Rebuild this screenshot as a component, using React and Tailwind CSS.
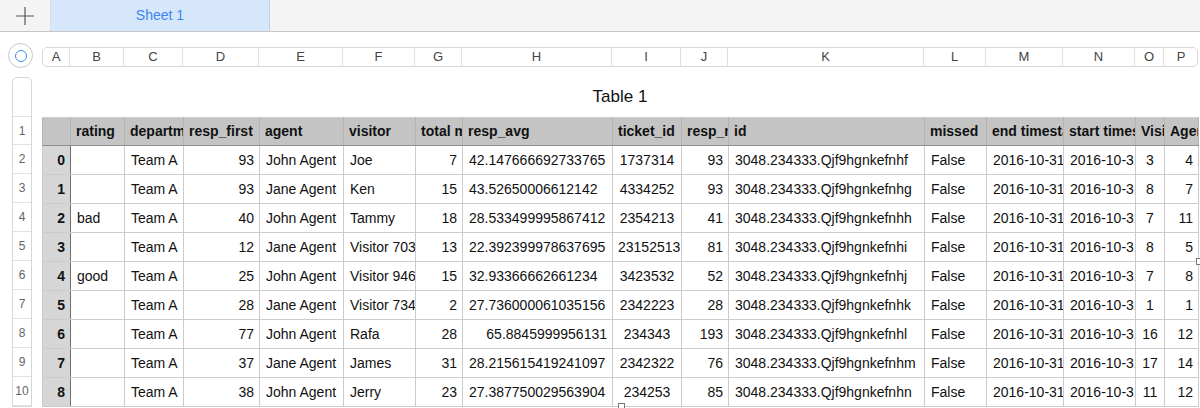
import React from 'react';

const font = { fontFamily: '"Liberation Sans", Arial, sans-serif' };

// column letters + widths (px), taken from the header bar
const cols = [
  ['A', 28], ['B', 54], ['C', 59], ['D', 76], ['E', 84], ['F', 72], ['G', 47], ['H', 150],
  ['I', 69], ['J', 47], ['K', 196], ['L', 62], ['M', 77], ['N', 72], ['O', 29], ['P', 34],
];

const headers = [
  '', 'rating', 'department', 'resp_first', 'agent', 'visitor', 'total msgs', 'resp_avg',
  'ticket_id', 'resp_max', 'id', 'missed', 'end timestamp', 'start timestamp', 'Visitor msgs', 'Agent msgs',
];

// alignment per column
const align = [
  'text-right', 'text-left', 'text-left', 'text-right', 'text-left', 'text-left', 'text-right', 'text-left',
  'text-center', 'text-right', 'text-left', 'text-left', 'text-left', 'text-left', 'text-center', 'text-right',
];

const rows = [
  [0, '', 93, 'John Agent', 'Joe', 7, '42.147666692733765', '1737314', 93, 'f', 3, 4],
  [1, '', 93, 'Jane Agent', 'Ken', 15, '43.52650006612142', '4334252', 93, 'g', 8, 7],
  [2, 'bad', 40, 'John Agent', 'Tammy', 18, '28.533499995867412', '2354213', 41, 'h', 7, 11],
  [3, '', 12, 'Jane Agent', 'Visitor 703', 13, '22.392399978637695', '23152513', 81, 'i', 8, 5],
  [4, 'good', 25, 'John Agent', 'Visitor 946', 15, '32.93366662661234', '3423532', 52, 'j', 7, 8],
  [5, '', 28, 'Jane Agent', 'Visitor 734', 2, '27.736000061035156', '2342223', 28, 'k', 1, 1],
  [6, '', 77, 'John Agent', 'Rafa', 28, '65.8845999956131', '234343', 193, 'l', 16, 12],
  [7, '', 37, 'Jane Agent', 'James', 31, '28.215615419241097', '2342322', 76, 'm', 17, 14],
  [8, '', 38, 'John Agent', 'Jerry', 23, '27.387750029563904', '234253', 85, 'n', 11, 12],
].map(([i, rating, first, agent, visitor, total, avg, ticket, max, s, vis, age]) => [
  i, rating, 'Team A', first, agent, visitor, total, avg, ticket, max,
  '3048.234333.Qjf9hgnkefnh' + s, 'False', '2016-10-31', '2016-10-31', vis, age,
]);

function SelectAll() {
  return (
    <div className="w-[25px] h-[25px] rounded-full border border-[#c9c9c9] bg-white flex items-center justify-center">
      <div className="w-[12px] h-[12px] rounded-full border-[1.5px] border-[#3d8ff2]" />
    </div>
  );
}

export default function App() {
  return (
    <div className="w-[1200px] h-[408px] overflow-hidden bg-white relative" style={font}>
      {/* sheet tabs */}
      <div className="h-[32px] flex bg-[#f4f4f4] border-b border-[#c6c6c6]">
        <div className="w-[51px] flex items-center justify-center border-r border-[#dcdcdc]">
          <svg width="20" height="20" viewBox="0 0 20 20">
            <path d="M10 1v18M1 10h18" stroke="#555" strokeWidth="1.2" />
          </svg>
        </div>
        <div className="w-[219px] bg-[#d6e6fb] border-r border-[#c3cfe0] flex items-center justify-center text-[14px] text-[#3b86ef]">
          Sheet 1
        </div>
      </div>

      <div className="flex">
        {/* left rail: select-all + row numbers */}
        <div className="w-[42px] shrink-0 flex flex-col items-start">
          <div className="ml-[8px] mt-[11px]">
            <SelectAll />
          </div>
          <div className="ml-[12px] mt-[9px] w-[20px] border border-[#d6d6d6] rounded-t-[5px] bg-white text-[12px] text-[#666]">
            <div className="h-[39px] border-b border-[#e2e2e2]" />
            {Array.from({ length: 10 }, (_, i) => (
              <div key={i} className={`${i === 0 ? 'h-[28px]' : 'h-[29px]'} border-b border-[#e2e2e2] flex items-center justify-center`}>
                {i + 1}
              </div>
            ))}
          </div>
        </div>

        {/* sheet area */}
        <div className="w-[1156px] shrink-0 flex flex-col">
          <div className="mt-[15px] h-[20px] flex border border-[#d9d9d9] rounded-[5px] bg-white text-[13px] text-[#444] overflow-hidden">
            {cols.map(([c, w], i) => (
              <div
                key={c}
                className={`shrink-0 flex items-center justify-center ${i < cols.length - 1 ? 'border-r border-[#e0e0e0]' : ''}`}
                style={{ width: i === 0 ? w - 1 : w }}
              >
                {c}
              </div>
            ))}
          </div>

          <div className="h-[50px] flex items-center justify-center pt-[10px] text-[17px] text-[#111]">Table 1</div>

          <div className="relative">
            <table className="table-fixed w-[1156px] border-collapse text-[14px] text-[#111]">
              <colgroup>
                {cols.map(([c, w]) => (
                  <col key={c} style={{ width: w }} />
                ))}
              </colgroup>
              <thead>
                <tr className="h-[28px] bg-[#c4c4c4]">
                  {headers.map((h, i) => (
                    <th
                      key={i}
                      className="p-0 text-left font-bold whitespace-nowrap border-x border-[#b3b3b3] border-t border-t-[#cfcfcf] border-b-[1.5px] border-b-[#8f8f8f]"
                    >
                      <div className="overflow-hidden px-[5px]">{h}</div>
                    </th>
                  ))}
                </tr>
              </thead>
              <tbody>
                {rows.map((r, ri) => (
                  <tr key={ri} className="h-[29px]">
                    {r.map((v, ci) => {
                      // one resp_avg value is short enough to sit right-aligned
                      const a = ri === 6 && ci === 7 ? 'text-right' : align[ci];
                      return (
                        <td
                          key={ci}
                          className={`p-0 whitespace-nowrap border border-[#cbcbcb] ${
                            ci === 0 ? 'bg-[#d6d6d6] font-bold border-r-[1.5px] border-r-[#6f6f6f]' : 'bg-white'
                          } ${a}`}
                        >
                          <div className={`overflow-hidden ${a === 'text-left' ? 'pl-[6px]' : 'px-[5px]'}`}>{v}</div>
                        </td>
                      );
                    })}
                  </tr>
                ))}
              </tbody>
            </table>
            {/* resize handle on the right edge */}
            <div className="absolute right-[-5px] top-[141px] w-[7px] h-[7px] bg-white border border-[#777]" />
          </div>
        </div>
      </div>
      {/* resize handle on the bottom edge */}
      <div className="absolute left-[618px] top-[403px] w-[7px] h-[7px] bg-white border border-[#777]" />
    </div>
  );
}
